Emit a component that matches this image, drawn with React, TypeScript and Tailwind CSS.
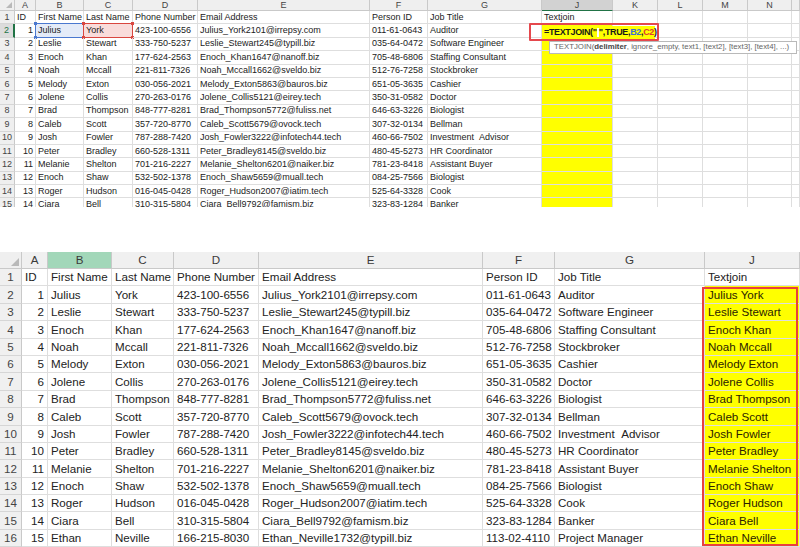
import clsx from "clsx";

type Person = [string, string, string, string, string, string];

const people: Person[] = [
  ["Julius", "York", "423-100-6556", "Julius_York2101@irrepsy.com", "011-61-0643", "Auditor"],
  ["Leslie", "Stewart", "333-750-5237", "Leslie_Stewart245@typill.biz", "035-64-0472", "Software Engineer"],
  ["Enoch", "Khan", "177-624-2563", "Enoch_Khan1647@nanoff.biz", "705-48-6806", "Staffing Consultant"],
  ["Noah", "Mccall", "221-811-7326", "Noah_Mccall1662@sveldo.biz", "512-76-7258", "Stockbroker"],
  ["Melody", "Exton", "030-056-2021", "Melody_Exton5863@bauros.biz", "651-05-3635", "Cashier"],
  ["Jolene", "Collis", "270-263-0176", "Jolene_Collis5121@eirey.tech", "350-31-0582", "Doctor"],
  ["Brad", "Thompson", "848-777-8281", "Brad_Thompson5772@fuliss.net", "646-63-3226", "Biologist"],
  ["Caleb", "Scott", "357-720-8770", "Caleb_Scott5679@ovock.tech", "307-32-0134", "Bellman"],
  ["Josh", "Fowler", "787-288-7420", "Josh_Fowler3222@infotech44.tech", "460-66-7502", "Investment\u00a0\u00a0Advisor"],
  ["Peter", "Bradley", "660-528-1311", "Peter_Bradley8145@sveldo.biz", "480-45-5273", "HR Coordinator"],
  ["Melanie", "Shelton", "701-216-2227", "Melanie_Shelton6201@naiker.biz", "781-23-8418", "Assistant Buyer"],
  ["Enoch", "Shaw", "532-502-1378", "Enoch_Shaw5659@muall.tech", "084-25-7566", "Biologist"],
  ["Roger", "Hudson", "016-045-0428", "Roger_Hudson2007@iatim.tech", "525-64-3328", "Cook"],
  ["Ciara", "Bell", "310-315-5804", "Ciara_Bell9792@famism.biz", "323-83-1284", "Banker"],
  ["Ethan", "Neville", "166-215-8030", "Ethan_Neville1732@typill.biz", "113-02-4110", "Project Manager"],
];

const headings = ["ID", "First Name", "Last Name", "Phone Number", "Email Address", "Person ID", "Job Title", "Textjoin"];

type Col = { label: string; width: string; right?: boolean };

const topCols: Col[] = [
  { label: "A", width: "w-[21px]", right: true },
  { label: "B", width: "w-[48px]" },
  { label: "C", width: "w-[49px]" },
  { label: "D", width: "w-[65px]" },
  { label: "E", width: "w-[172px]" },
  { label: "F", width: "w-[58px]" },
  { label: "G", width: "w-[114px]" },
  { label: "J", width: "w-[71px]" },
  { label: "K", width: "w-[45px]" },
  { label: "L", width: "w-[45px]" },
  { label: "M", width: "w-[45px]" },
  { label: "N", width: "w-[44px]" },
  { label: "", width: "flex-1" },
];

const bottomCols: Col[] = [
  { label: "A", width: "w-[26px]", right: true },
  { label: "B", width: "w-[64px]" },
  { label: "C", width: "w-[62px]" },
  { label: "D", width: "w-[85px]" },
  { label: "E", width: "w-[224px]" },
  { label: "F", width: "w-[72px]" },
  { label: "G", width: "w-[150px]" },
  { label: "J", width: "flex-1" },
];

// values of one sheet row, by column index
const rowValues = (r: number, joined: boolean) => {
  if (r === 1) return headings;
  const p = people[r - 2];
  return [String(r - 1), ...p, joined ? `${p[0]} ${p[1]}` : ""];
};

function Corner({ size, tri }: { size: string; tri: number }) {
  return (
    <div className={clsx("shrink-0 flex items-end justify-end p-[2px] bg-[#efefef] border-r border-b border-[#c9c9c9]", size)}>
      <svg width={tri} height={tri} viewBox="0 0 8 8">
        <polygon points="8,0 8,8 0,8" fill="#b9b9b9" />
      </svg>
    </div>
  );
}

// the little squares at the corners of a referenced range
function Handles({ color }: { color: string }) {
  return (
    <>
      <span className={clsx("absolute -left-[2px] -top-[2px] w-[3px] h-[3px]", color)} />
      <span className={clsx("absolute -right-[2px] -top-[2px] w-[3px] h-[3px]", color)} />
      <span className={clsx("absolute -left-[2px] -bottom-[2px] w-[3px] h-[3px]", color)} />
      <span className={clsx("absolute -right-[2px] -bottom-[2px] w-[3px] h-[3px]", color)} />
    </>
  );
}

function TopSheet() {
  const rows = Array.from({ length: 15 }, (_, i) => i + 1);
  return (
    <div className="relative h-[207px] overflow-hidden text-[9px] text-[#222]">
      {/* column letters */}
      <div className="flex h-[11px]">
        <Corner size="w-[15px]" tri={6} />
        {topCols.map((c, i) => (
          <div
            key={i}
            className={clsx(
              "shrink-0 flex items-center justify-center border-r border-b border-[#c9c9c9] text-[#444]",
              c.width,
              c.label === "J" ? "bg-[#d2d2d2] border-b-[#217346]" : "bg-[#efefef]"
            )}
          >
            {c.label}
          </div>
        ))}
      </div>
      {rows.map((r) => {
        const vals = rowValues(r, false);
        return (
          <div key={r} className="flex h-[13.4px]">
            <div
              className={clsx(
                "shrink-0 w-[15px] flex items-center justify-center border-b border-[#d6d6d6]",
                r === 2 ? "bg-[#dcdcdc] text-[#217346] border-r-2 border-r-[#217346]" : "bg-[#efefef] text-[#444] border-r border-r-[#c9c9c9]"
              )}
            >
              {r}
            </div>
            {topCols.map((c, i) => (
              <div
                key={i}
                className={clsx(
                  "shrink-0 relative flex items-center whitespace-nowrap border-r border-b border-[#dedede] px-[2px]",
                  c.width,
                  c.right && r > 1 ? "justify-end" : "",
                  c.label === "J" && r > 1 ? "bg-[#ffff00]" : ""
                )}
              >
                {r === 2 && c.label === "B" && (
                  <div className="absolute -inset-[1px] border border-[#4a78cf] bg-[#4a78cf]/15">
                    <Handles color="bg-[#4a78cf]" />
                  </div>
                )}
                {r === 2 && c.label === "C" && (
                  <div className="absolute -inset-[1px] border border-[#d9463f] bg-[#e8756f]/25">
                    <Handles color="bg-[#d9463f]" />
                  </div>
                )}
                <span className="relative">{vals[i] ?? ""}</span>
              </div>
            ))}
          </div>
        );
      })}

      {/* cell J2 being edited, with the red call-out round it */}
      <div className="absolute left-[529px] top-[23px] w-[130px] h-[18px] border-2 border-[#e5484d] rounded-[1px] flex items-center pl-[11px]">
        <div className="h-[13px] w-[113px] bg-[#ffff00] flex items-center pl-[2px] whitespace-nowrap font-bold text-[9px] tracking-[-0.35px] text-[#1a1a1a]">
          =TEXTJOIN("<span className="bg-white">&nbsp;</span>",TRUE,<span className="text-[#3d6fd1]">B2</span>,
          <span className="text-[#e0392f]">C2</span>)
        </div>
      </div>

      {/* function hint */}
      <div className="absolute left-[549px] top-[41px] right-[3px] h-[12.5px] bg-white border border-[#b9b9b9] flex items-center pl-[4px] whitespace-nowrap text-[7.8px] text-[#666]">
        TEXTJOIN(<b className="text-[#444]">delimiter</b>, ignore_empty, text1, [text2], [text3], [text4], ...)
      </div>
    </div>
  );
}

function BottomSheet() {
  const rows = Array.from({ length: 16 }, (_, i) => i + 1);
  return (
    <div className="relative h-[295px] overflow-hidden text-[11.6px] text-[#222]">
      <div className="flex h-[17px]">
        <Corner size="w-[22px]" tri={8} />
        {bottomCols.map((c, i) => (
          <div
            key={i}
            className={clsx(
              "shrink-0 flex items-center justify-center border-r border-b border-[#c9c9c9] text-[#3a3a3a]",
              c.width,
              c.label === "B" ? "bg-[#a2d7b9]" : "bg-[#f0f0f0]"
            )}
          >
            {c.label}
          </div>
        ))}
      </div>
      {rows.map((r) => {
        const vals = rowValues(r, true);
        return (
          <div key={r} className="flex h-[17.4px]">
            <div className="shrink-0 w-[22px] flex items-center justify-center bg-[#f0f0f0] border-r border-r-[#c9c9c9] border-b border-b-[#d6d6d6] text-[#444]">
              {r}
            </div>
            {bottomCols.map((c, i) => (
              <div
                key={i}
                className={clsx(
                  "shrink-0 flex items-center whitespace-nowrap border-r border-b border-[#dedede] px-[3px]",
                  c.width,
                  c.right && r > 1 ? "justify-end" : "",
                  c.label === "J" && r > 1 ? "bg-[#ffff00] text-[#2b2200]" : ""
                )}
              >
                {vals[i] ?? ""}
              </div>
            ))}
          </div>
        );
      })}
      {/* red call-out round the results */}
      <div className="absolute left-[702px] top-[35px] w-[96px] h-[259px] border-2 border-[#e8403e]" />
    </div>
  );
}

export default function App() {
  return (
    <div className="w-[800px] h-[547px] bg-white overflow-hidden font-['Liberation_Sans',Arial,sans-serif] leading-none flex flex-col gap-[45px]">
      <TopSheet />
      <BottomSheet />
    </div>
  );
}
